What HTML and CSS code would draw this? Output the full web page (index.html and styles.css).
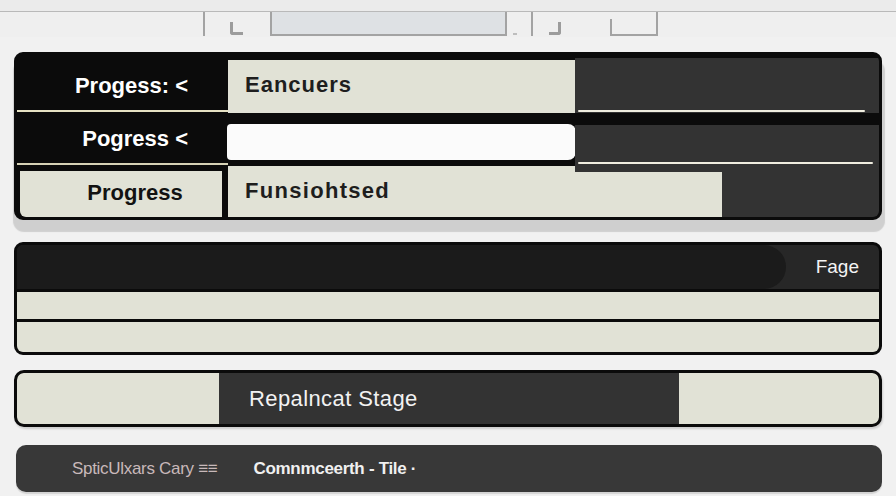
FILE: index.html
```html
<!DOCTYPE html>
<html lang="en">
<head>
<meta charset="utf-8">
<title>Progress stages</title>
<link rel="stylesheet" href="styles.css">
</head>
<body>
<div class="topstrip"></div>
<div class="toolbar">
  <span class="vline"></span>
  <span class="hook hook-l"></span>
  <span class="field"></span>
  <span class="dash"></span>
  <span class="vline vline-2"></span>
  <span class="hook hook-r"></span>
  <span class="tray"></span>
</div>
<main class="page">
  <section class="panel stages">
    <div class="row row-1">
      <div class="label">Progess: &lt;</div>
      <div class="value value-light">Eancuers</div>
      <div class="track"><span class="rule"></span></div>
    </div>
    <div class="row row-2">
      <div class="label label-2">Pogress &lt;</div>
      <div class="value value-input"><span class="pill"></span></div>
      <div class="track track-2"><span class="rule rule-2"></span></div>
    </div>
    <div class="row row-3">
      <div class="label label-light"><span class="chip">Progress</span></div>
      <div class="value value-light value-3">Funsiohtsed</div>
      <div class="track track-3"><span class="ext"></span></div>
    </div>
  </section>

  <section class="panel list">
    <div class="list-head">
      <div class="head-bar"></div>
      <div class="head-label">Fage</div>
    </div>
    <div class="list-row"></div>
    <div class="list-row list-row-last"></div>
  </section>

  <section class="panel stage">
    <div class="stage-side"></div>
    <div class="stage-main">Repalncat Stage</div>
    <div class="stage-side stage-side-r"></div>
  </section>

  <footer class="statusbar">
    <span class="status-a">SpticUlxars Cary ≡≡</span>
    <span class="status-b">Comnmceerth - Tile ·</span>
  </footer>
</main>
</body>
</html>
```

FILE: styles.css
```css
* { box-sizing: border-box; }

html, body {
  margin: 0;
  padding: 0;
}

body {
  width: 896px;
  height: 496px;
  overflow: hidden;
  background: #f1f1f1;
  font-family: "Liberation Sans", Arial, sans-serif;
}

.topstrip {
  height: 12px;
  background: #ebebeb;
  border-bottom: 1px solid #b9b9b9;
}

.toolbar {
  display: flex;
  height: 25px;
  padding-left: 203px;
  background: #efefef;
}

.vline {
  width: 2px;
  height: 24px;
  background: #a3a3a3;
}

.vline-2 { margin-left: 14px; }

.hook {
  width: 13px;
  height: 13px;
  margin-top: 10px;
  border-bottom: 3px solid #9c9c9c;
}

.hook-l {
  margin-left: 25px;
  border-left: 3px solid #9c9c9c;
  border-bottom-left-radius: 3px;
}

.hook-r {
  margin-left: 16px;
  width: 12px;
  border-right: 3px solid #9c9c9c;
  border-bottom-right-radius: 3px;
}

.field {
  margin-left: 27px;
  width: 237px;
  height: 24px;
  background: #dee1e4;
  border-left: 2px solid #a3a3a3;
  border-bottom: 2px solid #a3a3a3;
  border-right: 2px solid #a3a3a3;
}

.dash {
  width: 4px;
  height: 2px;
  margin: 21px 0 0 6px;
  background: #bdbdbd;
}

.tray {
  margin-left: 49px;
  width: 48px;
  height: 24px;
  border-right: 2px solid #a3a3a3;
  border-bottom: 2px solid #a3a3a3;
  background: linear-gradient(#a3a3a3, #a3a3a3) left bottom / 2px 15px no-repeat;
}

.page {
  display: flex;
  flex-direction: column;
  padding: 0 14px;
}

.panel {
  border: 3px solid #0b0b0b;
  border-radius: 9px;
  background: #0b0b0b;
  overflow: hidden;
}

/* ---------- panel 1 ---------- */
.stages {
  margin-top: 15px;
  display: flex;
  flex-direction: column;
  box-shadow: 1px 10px 1px 2px #cfcfcf;
}

.row {
  display: flex;
}

.row-1 { height: 58px; }
.row-2 { height: 52px; }
.row-3 { height: 52px; }

.label {
  width: 211px;
  flex: none;
  display: flex;
  align-items: center;
  justify-content: flex-end;
  padding: 6px 40px 0 0;
  color: #ffffff;
  font-size: 22px;
  font-weight: bold;
  border-bottom: 2px solid #e6e2c3;
  margin-bottom: 1px;
}

.label-2 {
  border-bottom-color: #d6d2b6;
  margin-bottom: 0;
  padding-top: 2px;
}

.label-light {
  border-bottom: none;
  margin-bottom: 0;
  padding: 0;
  align-items: stretch;
}

.chip {
  flex: 1;
  margin: 6px 6px 0 3px;
  background: #e1e2d6;
  border-bottom-left-radius: 6px;
  color: #121212;
  display: flex;
  align-items: center;
  justify-content: center;
  padding: 0 0 3px 28px;
}

.value {
  width: 347px;
  flex: none;
  display: flex;
  align-items: center;
  padding-left: 17px;
  color: #1e1e1e;
  font-size: 22px;
  font-weight: bold;
  letter-spacing: 1px;
}

.value-light {
  background: #e1e2d6;
}

.row-1 .value-light {
  margin-top: 5px;
  padding-bottom: 4px;
}

.value-input {
  padding: 11px 0 5px;
  align-items: stretch;
}

.pill {
  flex: 1;
  margin: 0 -1px;
  background: #fbfbfb;
  border-radius: 4px 8px 8px 4px;
}

.value-3 {
  margin-top: 1px;
  letter-spacing: 1.3px;
  white-space: nowrap;
  padding-bottom: 2px;
}

.track {
  flex: 1;
  display: flex;
  flex-direction: column;
  justify-content: flex-end;
  background: #333333;
  margin-top: 3px;
  padding: 0 14px 1px 3px;
}

.rule {
  height: 2px;
  background: #f0eee0;
  border-radius: 1px;
}

.track-2 {
  margin-top: 12px;
  padding: 0 6px 1px 3px;
}

.track-3 {
  margin-top: 0;
  padding: 0;
  justify-content: flex-start;
  align-items: flex-start;
}

.ext {
  width: 147px;
  height: 45px;
  margin-top: 7px;
  background: #e1e2d6;
}

/* ---------- panel 2 ---------- */
.list {
  margin-top: 22px;
  display: flex;
  flex-direction: column;
  gap: 3px;
}

.list-head {
  height: 44px;
  display: flex;
  background: #272727;
}

.head-bar {
  flex: 1;
  background: #1b1b1b;
  border-radius: 0 22px 22px 0;
}

.head-label {
  padding: 0 20px 0 30px;
  display: flex;
  align-items: center;
  color: #f4f4f4;
  font-size: 19px;
}

.list-row {
  height: 27px;
  background: #e1e2d6;
}

.list-row-last {
  height: 30px;
}

/* ---------- panel 3 ---------- */
.stage {
  margin-top: 15px;
  height: 57px;
  display: flex;
  border-radius: 10px;
  background: #333333;
  box-shadow: 1px 2px 2px rgba(0, 0, 0, 0.15);
}

.stage-side {
  width: 202px;
  background: #e1e2d6;
  border-radius: 6px 0 0 6px;
}

.stage-side-r {
  width: 200px;
  border-radius: 0 6px 6px 0;
}

.stage-main {
  flex: 1;
  display: flex;
  align-items: center;
  padding-left: 30px;
  color: #f2f2f2;
  font-size: 22px;
  letter-spacing: 0.4px;
}

/* ---------- status bar ---------- */
.statusbar {
  margin: 18px 0 0 2px;
  height: 47px;
  border-radius: 10px;
  background: #383838;
  display: flex;
  align-items: center;
  gap: 36px;
  padding-left: 56px;
  box-shadow: 0 2px 1px rgba(0, 0, 0, 0.12);
}

.status-a {
  color: #c8b9ba;
  font-size: 17px;
  letter-spacing: -0.3px;
}

.status-b {
  color: #f0f0f0;
  font-size: 17px;
  font-weight: bold;
  letter-spacing: -0.3px;
}
```
